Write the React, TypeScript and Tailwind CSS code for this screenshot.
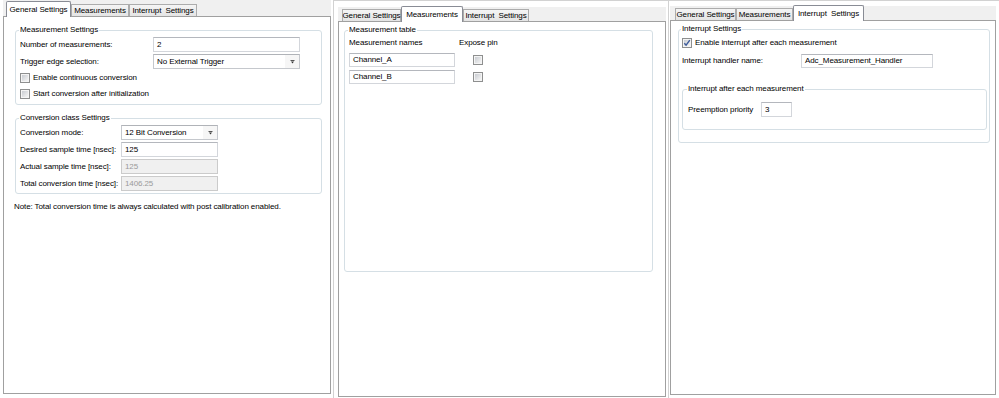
import React from 'react';

// Windows 7 style property pages, three screenshots side by side

const FONT = "font-['Liberation_Sans',Arial,sans-serif] text-[8px] tracking-[-0.1px] leading-[10px] text-black";

type TabProps = { label: string; active?: boolean; w: string };

const Tab: React.FC<TabProps> = ({ label, active, w }) => {
  if (active) {
    return (
      <div
        className={`${w} h-[16px] -mb-px relative z-10 bg-white border border-b-0 border-[#898c95] rounded-t-[2px] flex items-center justify-center whitespace-pre`}
      >
        {label}
      </div>
    );
  }
  return (
    <div
      className={`${w} h-[12px] bg-gradient-to-b from-[#f5f5f5] to-[#e4e4e4] border border-b-0 border-[#acacac] flex items-center justify-center whitespace-pre`}
    >
      {label}
    </div>
  );
};

const TabStrip: React.FC<{ active: number; widths: string[]; h: string; pl: string }> = ({ active, widths, h, pl }) => {
  const labels = ['General Settings', 'Measurements', 'Interrupt  Settings'];
  return (
    <div className={`${h} ${pl} bg-[#f0f0f0] flex items-end shrink-0`}>
      {labels.map((l, i) => (
        <Tab key={l} label={l} active={i === active} w={widths[i]} />
      ))}
    </div>
  );
};

const TextBox: React.FC<{ w: string; value: string; disabled?: boolean; h?: string }> = ({ w, value, disabled, h = 'h-[15px]' }) => (
  <div
    className={`${w} ${h} border flex items-center pl-[3px] ${
      disabled
        ? 'bg-[#f0f0f0] border-[#cbcbcb] text-[#9a9a9a]'
        : 'bg-white border-[#d3d6db] border-t-[#b4b7bd]'
    }`}
  >
    {value}
  </div>
);

const ComboBox: React.FC<{ w: string; value: string }> = ({ w, value }) => (
  <div className={`${w} h-[15px] border border-[#c5c8cd] border-t-[#b0b3b8] bg-white flex items-center`}>
    <span className="flex-1 pl-[3px]">{value}</span>
    <div className="w-[14px] h-full bg-[#f6f6f6] flex items-center justify-center">
      <svg width="5" height="4" viewBox="0 0 5 4">
        <rect x="0.5" y="0" width="4" height="1" fill="#555" />
        <polygon points="1,1.5 4,1.5 2.5,3.5" fill="#333" />
      </svg>
    </div>
  </div>
);

const CheckBox: React.FC<{ checked?: boolean }> = ({ checked }) => (
  <div className="w-[10px] h-[10px] border border-[#8e8f8f] bg-[#f4f4f4] p-px shrink-0 relative">
    <div className="w-full h-full bg-gradient-to-br from-[#c9ccd1] to-[#f5f5f5]" />
    {checked && (
      <svg className="absolute left-0 top-0" width="8" height="8" viewBox="0 0 8 8">
        <path d="M1.3 4.2 L3.1 6.2 L6.8 1.2" stroke="#3c5a9a" strokeWidth="1.4" fill="none" />
      </svg>
    )}
  </div>
);

const Group: React.FC<{ title: string; className?: string; children: React.ReactNode }> = ({ title, className = '', children }) => (
  <fieldset className={`border border-[#d5dfe5] rounded-[3px] ${className}`}>
    <legend className="h-[10px] leading-[10px] px-px -ml-px">{title}</legend>
    {children}
  </fieldset>
);

const Row: React.FC<{ children: React.ReactNode; h?: string }> = ({ children, h = 'h-[17px]' }) => (
  <div className={`${h} flex items-center`}>{children}</div>
);

const GeneralPage: React.FC = () => (
  <div className="w-[333px] h-full flex flex-col pl-[3px] pr-[2px] pb-[4px]">
    <TabStrip active={0} widths={['w-[65px]', 'w-[58px]', 'w-[68px]']} h="h-[16px]" pl="pl-[3px]" />
    <div className="flex-1 border border-[#a0a0a0] bg-white flex flex-col">
      <Group title="Measurement Settings" className="mt-[8px] ml-[11px] mr-[8px] pl-[4px] pt-px pb-[2px]">
        <Row>
          <span className="w-[133px]">Number of measurements:</span>
          <TextBox w="w-[147px]" value="2" />
        </Row>
        <Row>
          <span className="w-[133px]">Trigger edge selection:</span>
          <ComboBox w="w-[147px]" value="No External Trigger" />
        </Row>
        <Row h="h-[16px]">
          <CheckBox />
          <span className="ml-[3px]">Enable continuous conversion</span>
        </Row>
        <Row h="h-[16px]">
          <CheckBox />
          <span className="ml-[3px]">Start conversion after initialization</span>
        </Row>
      </Group>
      <Group title="Conversion class Settings" className="mt-[8px] ml-[11px] mr-[8px] pl-[4px] pt-px pb-px">
        <Row>
          <span className="w-[101px]">Conversion mode:</span>
          <ComboBox w="w-[97px]" value="12 Bit Conversion" />
        </Row>
        <Row>
          <span className="w-[101px]">Desired sample time [nsec]:</span>
          <TextBox w="w-[97px]" value="125" />
        </Row>
        <Row>
          <span className="w-[101px]">Actual sample time [nsec]:</span>
          <TextBox w="w-[97px]" value="125" disabled />
        </Row>
        <Row>
          <span className="w-[101px]">Total conversion time [nsec]:</span>
          <TextBox w="w-[97px]" value="1406.25" disabled />
        </Row>
      </Group>
      <div className="mt-[8px] ml-[10px]">
        Note: Total conversion time is always calculated with post calibration enabled.
      </div>
    </div>
  </div>
);

const MeasurementsPage: React.FC = () => (
  <div className="w-[336px] h-full flex flex-col border-l border-r border-t border-[#d2d2d2] pl-[4px] pr-[2px] pt-[6px] pb-px">
    <TabStrip active={1} widths={['w-[59px]', 'w-[62px]', 'w-[66px]']} h="h-[14px]" pl="pl-[4px]" />
    <div className="flex-1 border border-[#a0a0a0] bg-white flex flex-col">
      <Group title="Measurement table" className="mt-[3px] ml-[5px] mr-[12px] pl-[4px] h-[247px]">
        <Row h="h-[16px]">
          <span className="w-[110px]">Measurement names</span>
          <span>Expose pin</span>
        </Row>
        {['Channel_A', 'Channel_B'].map((name) => (
          <Row key={name}>
            <TextBox w="w-[106px]" h="h-[14px]" value={name} />
            <div className="w-[37px] ml-[4px] flex justify-center">
              <CheckBox />
            </div>
          </Row>
        ))}
      </Group>
    </div>
  </div>
);

const InterruptPage: React.FC = () => (
  <div className="w-[330px] h-full flex flex-col border-t border-[#d2d2d2] pl-px pr-[3px] pt-[5px] pb-[3px]">
    <TabStrip active={2} widths={['w-[61px]', 'w-[57px]', 'w-[71px]']} h="h-[14px]" pl="pl-[5px]" />
    <div className="flex-1 border border-[#a0a0a0] bg-white flex flex-col">
      <Group title="Interrupt Settings" className="mt-[3px] ml-[7px] mr-[5px] pl-[3px] pb-[12px]">
        <Row>
          <CheckBox checked />
          <span className="ml-[3px]">Enable interrupt after each measurement</span>
        </Row>
        <div className="h-[18px] flex items-center mt-px">
          <span className="w-[119px]">Interrupt handler name:</span>
          <TextBox w="w-[132px]" h="h-[14px]" value="Adc_Measurement_Handler" />
        </div>
        <Group title="Interrupt after each measurement" className="mt-[14px] mr-[2px] pl-[5px] pt-[7px] pb-[11px]">
          <Row>
            <span className="w-[73px]">Preemption priority</span>
            <TextBox w="w-[31px]" value="3" />
          </Row>
        </Group>
      </Group>
    </div>
  </div>
);

export default function App() {
  return (
    <div className={`w-[999px] h-[398px] bg-white flex overflow-hidden ${FONT}`}>
      <GeneralPage />
      <MeasurementsPage />
      <InterruptPage />
    </div>
  );
}
